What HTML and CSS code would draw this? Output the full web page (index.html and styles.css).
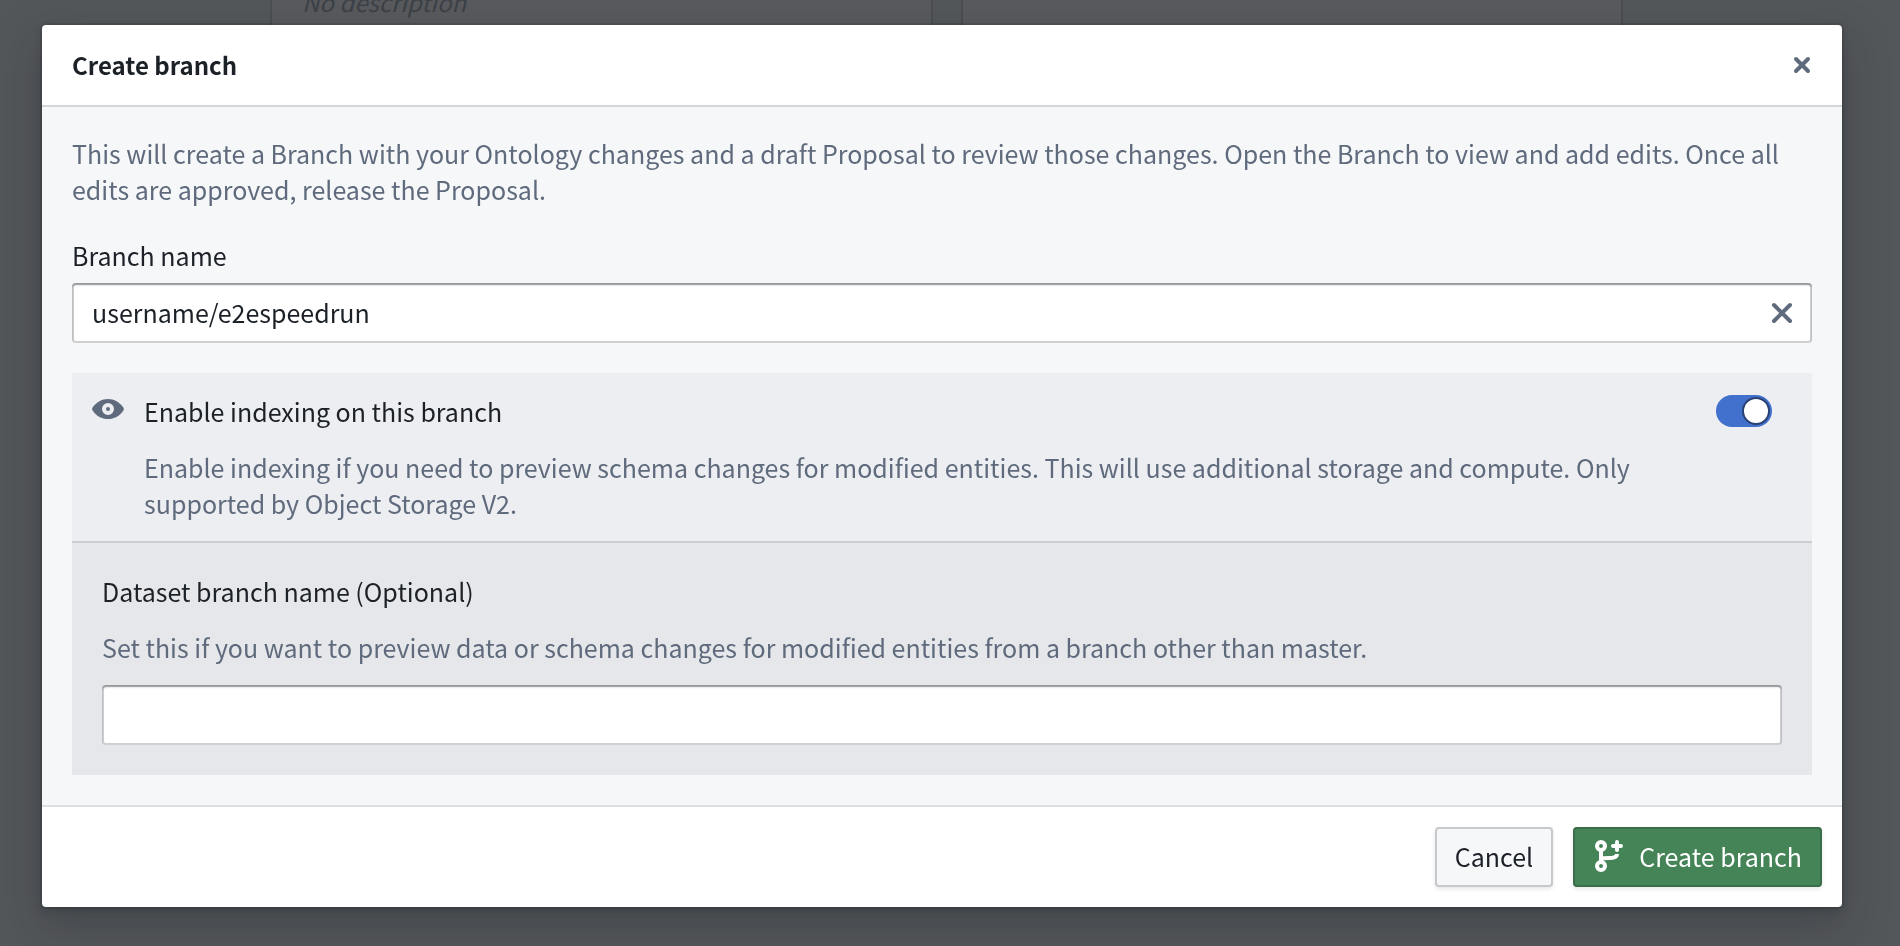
FILE: index.html
```html
<!DOCTYPE html>
<html lang="en">
  <head>
    <meta charset="UTF-8" />
    <meta name="viewport" content="width=device-width, initial-scale=1.0" />
    <title>Create branch</title>

    <link rel="stylesheet" href="styles.css">
  </head>
  <body>
    <main class="cards">
      <section class="card"><em>No description</em></section>
      <section class="card"></section>
    </main>

    <div class="overlay">
      <form class="dialog" id="form" role="dialog" aria-labelledby="dialogTitle">
        <header class="dialog__header">
          <h1 id="dialogTitle">Create branch</h1>
          <button type="button" class="btn__icon" aria-label="Close">
            <svg class="icon" viewBox="0 0 16 16"><path class="cross" d="M5 5l6 6M11 5l-6 6" /></svg>
          </button>
        </header>

        <div class="dialog__body">
          <p class="muted">
            This will create a Branch with your Ontology changes and a draft Proposal to review those changes.
            Open the Branch to view and add edits. Once all edits are approved, release the Proposal.
          </p>

          <div class="field">
            <label for="branchName">Branch name</label>
            <div class="input__group">
              <input type="text" id="branchName" value="username/e2espeedrun" />
              <button type="button" class="btn__icon" id="clearName" aria-label="Clear">
                <svg class="icon" viewBox="0 0 16 16"><path class="cross" d="M4 4l8 8M12 4l-8 8" /></svg>
              </button>
            </div>
          </div>

          <div class="panel">
            <div class="panel__top">
              <svg class="icon muted" viewBox="0 0 16 16">
                <path fill="currentColor" fill-rule="evenodd" d="M8 3C4.900 3 2.200 4.500.3 7.300a1.300 1.300 0 0 0 0 1.400C2.200 11.500 4.900 13 8 13s5.800-1.500 7.700-4.300a1.300 1.300 0 0 0 0-1.400C13.800 4.500 11.100 3 8 3zm0 2a3 3 0 1 1 0 6 3 3 0 0 1 0-6z" />
                <circle cx="8" cy="8" r="1" fill="currentColor" />
              </svg>
              <div class="panel__text">
                <label for="indexing">Enable indexing on this branch</label>
                <p class="muted">
                  Enable indexing if you need to preview schema changes for modified entities. This will use
                  additional storage and compute. Only supported by Object Storage V2.
                </p>
              </div>
              <input type="checkbox" class="switch" id="indexing" checked />
            </div>
            <div class="panel__bottom">
              <label for="datasetBranch">Dataset branch name (Optional)</label>
              <p class="muted" id="datasetHelp">
                Set this if you want to preview data or schema changes for modified entities from a branch other than master.
              </p>
              <input type="text" id="datasetBranch" aria-describedby="datasetHelp" />
            </div>
          </div>
        </div>

        <footer class="dialog__footer">
          <button type="button" class="btn">Cancel</button>
          <button type="submit" class="btn btn__success">
            <svg class="icon" viewBox="0 0 16 16" fill="none" stroke="currentColor" stroke-width="2">
              <circle cx="4" cy="3" r="2" />
              <circle cx="4" cy="13" r="2" />
              <path d="M4 5v6" />
              <path d="M4 9.600C5 9 6 9 8 9c2.400 0 4-.7 4-2" />
              <path stroke-linecap="round" d="M12 1v4M10 3h4" />
            </svg>
            Create branch
          </button>
        </footer>
      </form>
    </div>
    <script>
      const form = document.getElementById("form");
      const branchName = document.getElementById("branchName");
      const clearName = document.getElementById("clearName");

      clearName.addEventListener("click", () => {
        branchName.value = "";
        branchName.focus();
      });

      form.addEventListener("submit", (e) => e.preventDefault());
    </script>
  </body>
</html>
```

FILE: styles.css
```css
* {
  box-sizing: border-box;
}
body {
  margin: 0;
  min-height: 100vh;
  overflow: hidden;
  background-color: #f0f4f5;
  color: #1c2127;
  font-family: "Noto Sans CJK SC", "Noto Sans", sans-serif;
  font-size: 25px;
  line-height: 36px;
}
h1,
p {
  margin: 0;
}
button,
input {
  font: inherit;
  color: inherit;
}
button {
  cursor: pointer;
}
label {
  display: block;
}
.icon {
  display: block;
  flex: none;
  width: 32px;
  height: 32px;
}
.cross {
  stroke: currentColor;
  stroke-width: 2;
  stroke-linecap: round;
}
.muted {
  color: #5f6b7c;
}

/* page behind the dialog */
.cards {
  display: grid;
  grid-template-columns: 1fr 1fr;
  gap: 28px;
  padding: 0 277px 0 270px;
}
.card {
  height: 60px;
  padding: 0 30px;
  border: 2px solid #d3d8de;
  border-top: none;
  background-color: #fff;
  color: #a3abb8;
  font-size: 24px;
  line-height: 4px;
}

.overlay {
  position: fixed;
  inset: 0;
  overflow: auto;
  padding: 25px 58px 39px 42px;
  background-color: rgba(17, 20, 24, 0.7);
}
.dialog {
  border-radius: 4px;
  background-color: #fff;
  box-shadow: 0 0 0 2px rgba(17, 20, 24, 0.1), 0 4px 8px rgba(17, 20, 24, 0.2),
    0 18px 46px 6px rgba(17, 20, 24, 0.2);
}
.dialog__header {
  display: flex;
  align-items: center;
  justify-content: space-between;
  min-height: 82px;
  padding: 0 20px 0 30px;
  border-bottom: 2px solid #d4d6da;
}
.dialog__header h1 {
  font-size: 24px;
  font-weight: bold;
}
.dialog__body {
  padding: 28px 30px 30px;
  background-color: #f6f7f9;
}
.dialog__footer {
  display: flex;
  justify-content: flex-end;
  gap: 20px;
  padding: 20px;
  border-top: 2px solid #dcdfe4;
}

.field {
  display: flex;
  flex-direction: column;
  gap: 10px;
  margin: 30px 0;
}
.input__group {
  position: relative;
}
input[type="text"] {
  display: block;
  width: 100%;
  height: 60px;
  padding: 0 20px 2px;
  border: none;
  border-radius: 4px;
  background-color: #fff;
  box-shadow: inset 0 0 0 2px rgba(17, 20, 24, 0.2), inset 0 2px 2px rgba(17, 20, 24, 0.3);
}
.input__group input[type="text"] {
  padding-right: 60px;
}
.btn__icon {
  display: flex;
  align-items: center;
  justify-content: center;
  width: 40px;
  height: 40px;
  padding: 0;
  border: none;
  background: none;
  color: #5f6b7c;
}
.input__group .btn__icon {
  position: absolute;
  top: 10px;
  right: 10px;
}

.panel__top {
  display: flex;
  align-items: flex-start;
  padding: 20px 40px 20px 20px;
  border-bottom: 2px solid #cbcdd1;
  background-color: #edeef2;
}
.panel__text {
  flex: 1;
  padding: 0 60px 0 20px;
}
.panel__text label,
.panel__bottom label {
  margin-bottom: 20px;
}
.panel__bottom {
  padding: 30px;
  background-color: #e6e7eb;
}
.panel__bottom .muted {
  margin-bottom: 20px;
}

.switch {
  appearance: none;
  display: flex;
  justify-content: flex-end;
  width: 56px;
  height: 32px;
  margin: 2px 0 0;
  padding: 4px;
  border-radius: 16px;
  background-color: #4170cd;
  cursor: pointer;
}
.switch::before {
  content: "";
  width: 24px;
  height: 24px;
  border-radius: 50%;
  background-color: #fff;
  box-shadow: 0 0 0 2px rgba(17, 20, 24, 0.5);
}
.switch:not(:checked) {
  justify-content: flex-start;
  background-color: #8f99a8;
}

.btn {
  display: flex;
  align-items: center;
  gap: 14px;
  height: 60px;
  padding: 0 20px 2px;
  border: none;
  border-radius: 4px;
  background-color: #f6f7f9;
  box-shadow: inset 0 0 0 2px rgba(17, 20, 24, 0.2), 0 2px 4px rgba(17, 20, 24, 0.1);
}
.btn__success {
  background-color: #458457;
  color: #fff;
}
```
